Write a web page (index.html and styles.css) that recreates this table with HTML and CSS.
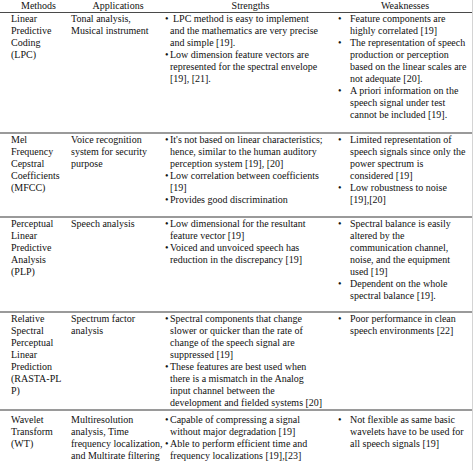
FILE: index.html
```html
<!DOCTYPE html>
<html>
<head>
<meta charset="utf-8">
<link rel="stylesheet" href="styles.css">
</head>
<body>
<div class="table">
  <div class="row head">
    <div class="c1 h1">Methods</div>
    <div class="c2 h2">Applications</div>
    <div class="c3 h3">Strengths</div>
    <div class="c4 h4">Weaknesses</div>
  </div>

  <div class="row r1">
    <div class="c1">Linear<br>Predictive<br>Coding<br>(LPC)</div>
    <div class="c2">Tonal analysis,<br>Musical instrument</div>
    <div class="c3">
      <div class="item"><span class="dot">•</span><p class="ind">LPC method is easy to implement<br>and the mathematics are very precise<br>and simple [19].</p></div>
      <div class="item"><span class="dot">•</span><p>Low dimension feature vectors are<br>represented for the spectral envelope<br>[19], [21].</p></div>
    </div>
    <div class="c4">
      <div class="item"><span class="dot">•</span><p>Feature components are<br>highly correlated [19]</p></div>
      <div class="item"><span class="dot">•</span><p>The representation of speech<br>production or perception<br>based on the linear scales are<br>not adequate [20].</p></div>
      <div class="item"><span class="dot">•</span><p>A priori information on the<br>speech signal under test<br>cannot be included [19].</p></div>
    </div>
  </div>

  <div class="row r2">
    <div class="c1">Mel<br>Frequency<br>Cepstral<br>Coefficients<br>(MFCC)</div>
    <div class="c2">Voice recognition<br>system for security<br>purpose</div>
    <div class="c3">
      <div class="item"><span class="dot">•</span><p>It's not based on linear characteristics;<br>hence, similar to the human auditory<br>perception system [19], [20]</p></div>
      <div class="item"><span class="dot">•</span><p>Low correlation between coefficients<br>[19]</p></div>
      <div class="item"><span class="dot">•</span><p>Provides good discrimination</p></div>
    </div>
    <div class="c4">
      <div class="item"><span class="dot">•</span><p>Limited representation of<br>speech signals since only the<br>power spectrum is<br>considered [19]</p></div>
      <div class="item"><span class="dot">•</span><p>Low robustness to noise<br>[19],[20]</p></div>
    </div>
  </div>

  <div class="row r3">
    <div class="c1">Perceptual<br>Linear<br>Predictive<br>Analysis<br>(PLP)</div>
    <div class="c2">Speech analysis</div>
    <div class="c3">
      <div class="item"><span class="dot">•</span><p>Low dimensional for the resultant<br>feature vector [19]</p></div>
      <div class="item"><span class="dot">•</span><p>Voiced and unvoiced speech has<br>reduction in the discrepancy [19]</p></div>
    </div>
    <div class="c4">
      <div class="item"><span class="dot">•</span><p>Spectral balance is easily<br>altered by the<br>communication channel,<br>noise, and the equipment<br>used [19]</p></div>
      <div class="item"><span class="dot">•</span><p>Dependent on the whole<br>spectral balance [19].</p></div>
    </div>
  </div>

  <div class="row r4">
    <div class="c1">Relative<br>Spectral<br>Perceptual<br>Linear<br>Prediction<br>(RASTA-PL<br>P)</div>
    <div class="c2">Spectrum factor<br>analysis</div>
    <div class="c3">
      <div class="item"><span class="dot">•</span><p>Spectral components that change<br>slower or quicker than the rate of<br>change of the speech signal are<br>suppressed [19]</p></div>
      <div class="item"><span class="dot">•</span><p>These features are best used when<br>there is a mismatch in the Analog<br>input channel between the<br>development and fielded systems [20]</p></div>
    </div>
    <div class="c4">
      <div class="item"><span class="dot">•</span><p>Poor performance in clean<br>speech environments [22]</p></div>
    </div>
  </div>

  <div class="row r5">
    <div class="c1">Wavelet<br>Transform<br>(WT)</div>
    <div class="c2">Multiresolution<br>analysis, Time<br>frequency localization,<br>and Multirate filtering</div>
    <div class="c3">
      <div class="item"><span class="dot">•</span><p>Capable of compressing a signal<br>without major degradation [19]</p></div>
      <div class="item"><span class="dot">•</span><p>Able to perform efficient time and<br>frequency localizations [19],[23]</p></div>
    </div>
    <div class="c4">
      <div class="item"><span class="dot">•</span><p>Not flexible as same basic<br>wavelets have to be used for<br>all speech signals [19]</p></div>
    </div>
  </div>
</div>
</body>
</html>
```

FILE: styles.css
```css
html, body {
  margin: 0;
  padding: 0;
  background: #ffffff;
}

body {
  width: 474px;
  height: 476px;
  overflow: hidden;
}

.table {
  width: 472px;
  height: 470px;
  border-right: 1px solid #d4d4d4;
  font-family: "Liberation Serif", "Times New Roman", serif;
  font-size: 10px;
  line-height: 12px;
  color: #111111;
  display: flex;
  flex-direction: column;
}

.row {
  display: grid;
  grid-template-columns: 66px 99px 171px 136px;
  white-space: nowrap;
}

.head {
  height: 12px;
  border-bottom: 1px solid #4a4a4a;
}

.head > div {
  text-align: center;
}

.h1 { padding-left: 6px; }
.h2 { padding-left: 9px; }
.h3 { padding-left: 9px; }
.h4 { padding-left: 22px; }

.r1 { height: 119px; border-bottom: 2px solid #9a9a9a; }
.r2 { height: 82px; border-bottom: 2px solid #9a9a9a; }
.r3 { height: 93px; border-bottom: 2px solid #9a9a9a; }
.r4 { height: 96px; border-bottom: 2px solid #9a9a9a; }
.r5 { padding-top: 3px; }

.c1 { padding-left: 11px; }
.c2 { padding-left: 5px; }
.c3 { padding-left: 0; }
.c4 { padding-left: 2px; }

.item {
  display: flex;
}

.item p {
  margin: 0;
}

.c3 .dot {
  width: 5px;
  flex: none;
}

.c4 .dot {
  width: 12px;
  flex: none;
}

.ind {
  text-indent: 3px;
}
```
